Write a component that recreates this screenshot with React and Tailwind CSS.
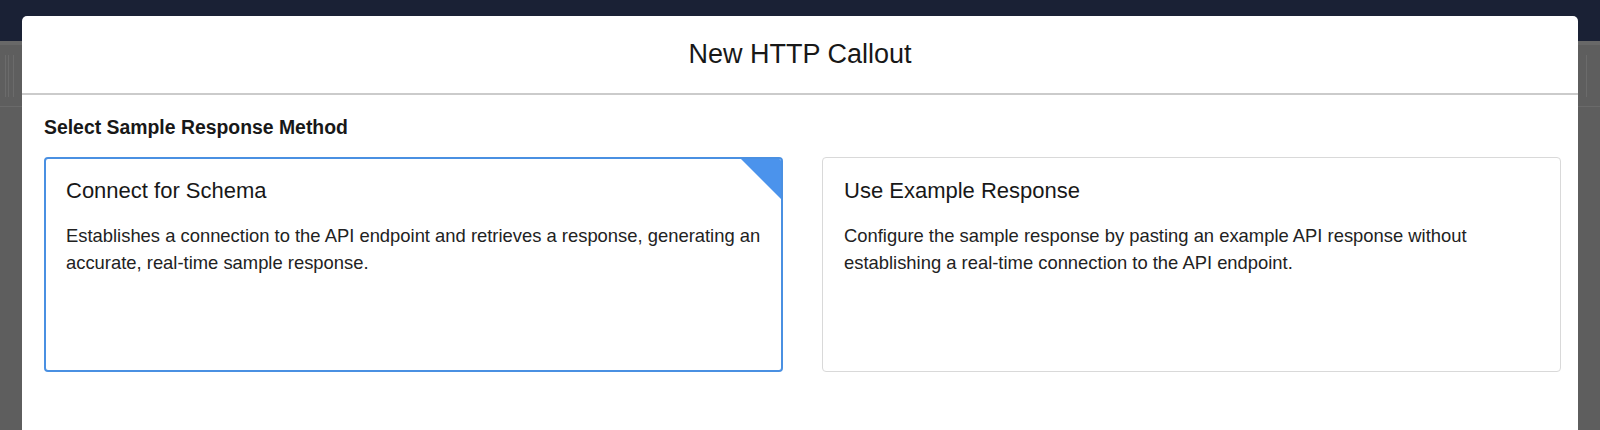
import React from "react";

const options = [
  {
    id: "connect",
    title: "Connect for Schema",
    lines: [
      "Establishes a connection to the API endpoint and retrieves a response, generating an",
      "accurate, real-time sample response.",
    ],
  },
  {
    id: "example",
    title: "Use Example Response",
    lines: [
      "Configure the sample response by pasting an example API response without",
      "establishing a real-time connection to the API endpoint.",
    ],
  },
];

const OptionCard = ({ option, selected }) => {
  return (
    <div
      className={
        selected
          ? "relative h-[215px] overflow-hidden rounded-[4px] border-2 border-[#4a90e2] bg-white px-[20px] pt-[18px]"
          : "relative h-[215px] overflow-hidden rounded-[4px] border border-[#d9d9d9] bg-white px-[21px] pt-[19px]"
      }
    >
      {selected && (
        <div className="absolute right-0 top-0 h-[40px] w-[40px] bg-[#4b93ec] [clip-path:polygon(0_0,100%_0,100%_100%)]" />
      )}
      <h2 className="text-[22px] leading-[28px] text-[#181818]">{option.title}</h2>
      <p className="mt-[17px] text-[18.4px] leading-[27px] text-[#222222]">
        {option.lines.map((line, i) => (
          <span key={i} className="block whitespace-nowrap">
            {line}
          </span>
        ))}
      </p>
    </div>
  );
};

export default function App() {
  return (
    <div className="relative h-[430px] w-full overflow-hidden bg-[#5e5e5e] font-['Liberation_Sans',Arial,sans-serif]">
      {/* page behind the overlay */}
      <div className="h-[41px] bg-[#1a2135]" />
      <div className="flex h-[66px] items-center justify-between border-t-[4px] border-b border-t-[#686868] border-b-[#6a6a6a]">
        <div className="flex h-[42px] gap-[2px]">
          <div className="w-[6px] border-r border-[#6b6b6b]" />
          <div className="w-[6px] border-x border-[#6b6b6b]" />
        </div>
        <div className="h-[42px] w-[14px] border-l border-[#6b6b6b]" />
      </div>

      {/* modal */}
      <div className="absolute bottom-0 left-[22px] right-[22px] top-[16px] rounded-t-[5px] bg-white">
        <div className="flex h-[79px] items-center justify-center border-b-2 border-[#cbcbcb]">
          <h1 className="text-[27px] text-[#181818]">New HTTP Callout</h1>
        </div>
        <div className="pl-[22px] pr-[17px] pt-[20px]">
          <div className="mb-[18px] text-[19.4px] font-bold leading-[24px] text-[#181818]">
            Select Sample Response Method
          </div>
          <div className="grid grid-cols-2 gap-[39px]">
            {options.map((option) => (
              <OptionCard key={option.id} option={option} selected={option.id === "connect"} />
            ))}
          </div>
        </div>
      </div>
    </div>
  );
}
